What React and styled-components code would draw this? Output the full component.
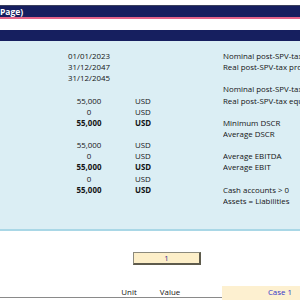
import React from "react";
import styled, { createGlobalStyle } from "styled-components";

const GlobalStyle = createGlobalStyle`
  html, body {
    margin: 0;
    padding: 0;
    background: #ffffff;
    overflow: hidden;
  }
  body {
    font-family: "Open Sans", "Liberation Sans", sans-serif;
    color: #141414;
  }
`;

const Sheet = styled.div`
  width: 300px;
  height: 300px;
  overflow: hidden;
  display: flex;
  flex-direction: column;

  & > * {
    flex-shrink: 0;
  }
`;

const TitleBar = styled.div`
  margin-top: 5px;
  height: 11px;
  background: #161f5f;
  border-top: 1px solid #3a3f5c;
  border-bottom: 2px solid #e4648a;
  display: flex;
  align-items: center;
  color: #ffffff;
  font-weight: 700;
  font-size: 8.5px;
  line-height: 11px;
  white-space: nowrap;
`;

const SectionBar = styled.div`
  margin-top: 11px;
  height: 11px;
  background: #161f5f;
`;

const Panel = styled.div`
  background: #dbeef4;
  border-bottom: 2px solid #a9d7e6;
  padding: 10px 0 22px;
  display: grid;
  grid-template-columns: 60px 58px 105px 1fr;
  grid-auto-rows: 11.15px;
  font-size: 7.9px;
  line-height: 11.15px;
  white-space: nowrap;
`;

const Cell = styled.div`
  font-weight: ${(p) => (p.$bold ? 700 : 400)};
  text-align: ${(p) => p.$align || "left"};
  padding-left: ${(p) => p.$indent || 0}px;
  overflow: hidden;
`;

const Lower = styled.div`
  padding-top: 21px;
  display: flex;
  flex-direction: column;
  font-size: 7.9px;
  white-space: nowrap;
`;

const SelectorRow = styled.div`
  display: flex;
  padding-left: 133px;
`;

const CaseInput = styled.div`
  width: 65px;
  height: 10px;
  background: #fdefc9;
  border: 1px solid #8c8a7c;
  border-right-width: 2px;
  border-bottom-width: 2px;
  border-right-color: #5e5b4c;
  border-bottom-color: #5e5b4c;
  color: #3b2f8f;
  text-align: center;
  line-height: 10px;
`;

const TableHead = styled.div`
  margin-top: 21px;
  display: flex;
  height: 12px;
`;

const HeadCells = styled.div`
  width: 222px;
  display: grid;
  grid-template-columns: 108px 42px 40px 1fr;
  border-bottom: 1px solid #8a8a8a;
  box-sizing: border-box;
  font-weight: 700;
  line-height: 12px;
`;

const CaseCell = styled.div`
  flex: 1;
  background: #fdf0d0;
  color: ${(p) => p.$color || "#3434c8"};
  text-align: right;
  padding-right: 8px;
  line-height: ${(p) => p.$lh || 12}px;
`;

const TableRow = styled.div`
  display: flex;
  height: 11px;
`;

const RowCells = styled.div`
  width: 222px;
  display: grid;
  grid-template-columns: 108px 42px 40px 1fr;
  line-height: 8px;
`;

const rows = [
  ["01/01/2023", "", "Nominal post-SPV-tax project IRR"],
  ["31/12/2047", "", "Real post-SPV-tax project IRR"],
  ["31/12/2045", "", ""],
  ["", "", "Nominal post-SPV-tax equity IRR"],
  ["55,000", "USD", "Real post-SPV-tax equity IRR"],
  ["0", "USD", ""],
  ["55,000", "USD", "Minimum DSCR", true],
  ["", "", "Average DSCR"],
  ["55,000", "USD", ""],
  ["0", "USD", "Average EBITDA"],
  ["55,000", "USD", "Average EBIT", true],
  ["0", "USD", ""],
  ["55,000", "USD", "Cash accounts > 0", true],
  ["", "", "Assets = Liabilities"],
];

const App = () => (
  <>
    <GlobalStyle />
    <Sheet>
      <TitleBar>Page)</TitleBar>
      <SectionBar />
      <Panel>
        {rows.map(([value, unit, label, bold], i) => (
          <React.Fragment key={i}>
            <div />
            <Cell $bold={bold} $align="center">
              {value}
            </Cell>
            <Cell $bold={bold} $indent={17}>
              {unit}
            </Cell>
            <Cell>{label}</Cell>
          </React.Fragment>
        ))}
      </Panel>
      <Lower>
        <SelectorRow>
          <CaseInput>1</CaseInput>
        </SelectorRow>
        <TableHead>
          <HeadCells>
            <div />
            <Cell $align="center">Unit</Cell>
            <Cell $align="center">Value</Cell>
            <div />
          </HeadCells>
          <CaseCell>Case 1</CaseCell>
        </TableHead>
        <TableRow>
          <RowCells>
            <div />
            <Cell $align="center">Years</Cell>
            <Cell $align="center">35</Cell>
            <div />
          </RowCells>
          <CaseCell $color="#141414" $lh={8}>
            35
          </CaseCell>
        </TableRow>
      </Lower>
    </Sheet>
  </>
);

export default App;
